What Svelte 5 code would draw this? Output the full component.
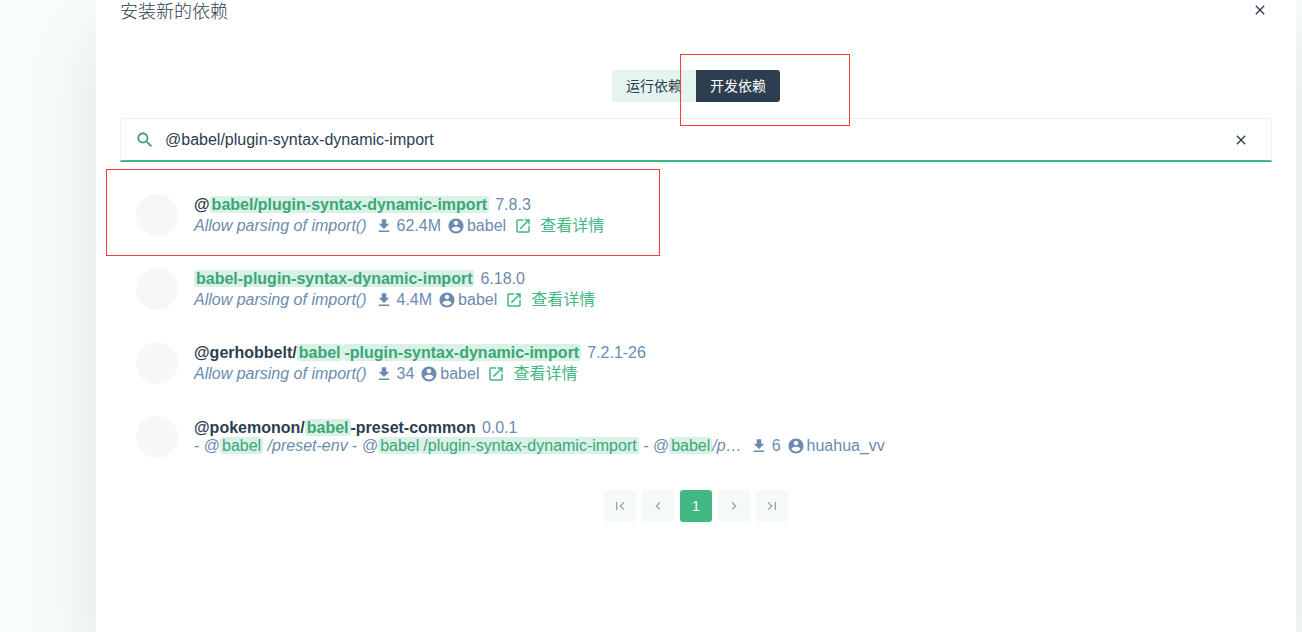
<script>
  let tab = 'dev';
  let search = '@babel/plugin-syntax-dynamic-import';

  // mark: true is the part of the text that matches the search
  const packages = [
    {
      name: [{text: '@'}, {text: 'babel/plugin-syntax-dynamic-import', mark: true}],
      version: '7.8.3',
      description: [{text: 'Allow parsing of import()'}],
      downloads: '62.4M',
      owner: 'babel',
      link: true,
      boxed: true
    },
    {
      name: [{text: 'babel-plugin-syntax-dynamic-import', mark: true}],
      version: '6.18.0',
      description: [{text: 'Allow parsing of import()'}],
      downloads: '4.4M',
      owner: 'babel',
      link: true
    },
    {
      name: [
        {text: '@gerhobbelt/'},
        {text: 'babel', mark: true},
        {text: '-plugin-syntax-dynamic-import', mark: true}
      ],
      version: '7.2.1-26',
      description: [{text: 'Allow parsing of import()'}],
      downloads: '34',
      owner: 'babel',
      link: true
    },
    {
      name: [{text: '@pokemonon/'}, {text: 'babel', mark: true}, {text: '-preset-common'}],
      version: '0.0.1',
      description: [
        {text: '- @', plain: true},
        {text: 'babel', mark: true},
        {text: ' /preset-env'},
        {text: ' - @', plain: true},
        {text: 'babel', mark: true},
        {text: '/plugin-syntax-dynamic-import', mark: true},
        {text: ' - @', plain: true},
        {text: 'babel', mark: true},
        {text: '/p…'}
      ],
      downloads: '6',
      owner: 'huahua_vv'
    }
  ];

  const icons = {
    close: 'M19 6.41L17.59 5 12 10.59 6.41 5 5 6.41 10.59 12 5 17.59 6.41 19 12 13.41 17.59 19 19 17.59 13.41 12z',
    search: 'M15.5 14h-.79l-.28-.27C15.41 12.59 16 11.11 16 9.5 16 5.91 13.09 3 9.5 3S3 5.91 3 9.5 5.91 16 9.5 16c1.61 0 3.09-.59 4.23-1.57l.27.28v.79l5 4.99L20.49 19l-4.99-5zm-6 0C7.01 14 5 11.99 5 9.5S7.01 5 9.5 5 14 7.01 14 9.5 11.99 14 9.5 14z',
    download: 'M19 9h-4V3H9v6H5l7 7 7-7zM5 18v2h14v-2H5z',
    account: 'M12 2C6.48 2 2 6.48 2 12s4.48 10 10 10 10-4.48 10-10S17.52 2 12 2zm0 3c1.66 0 3 1.34 3 3s-1.34 3-3 3-3-1.34-3-3 1.34-3 3-3zm0 14.2c-2.5 0-4.71-1.28-6-3.22.03-1.99 4-3.08 6-3.08 1.99 0 5.97 1.09 6 3.08-1.29 1.94-3.5 3.22-6 3.22z',
    open: 'M19 19H5V5h7V3H5c-1.11 0-2 .9-2 2v14c0 1.1.89 2 2 2h14c1.1 0 2-.9 2-2v-7h-2v7zM14 3v2h3.59l-9.83 9.83 1.41 1.41L19 6.41V10h2V3h-7z',
    first: 'M18.41 16.59L13.82 12l4.59-4.59L17 6l-6 6 6 6zM6 6h2v12H6z',
    prev: 'M15.41 7.41L14 6l-6 6 6 6 1.41-1.41L10.83 12z',
    next: 'M10 6L8.59 7.41 13.17 12l-4.58 4.59L10 18l6-6z',
    last: 'M5.59 7.41L10.18 12l-4.59 4.59L7 18l6-6-6-6zM16 6h2v12h-2z'
  };
</script>

<div class="page">
  <div class="modal">
    <header>
      <h1>安装新的依赖</h1>
      <button class="icon_button" aria-label="关闭">
        <svg class="small" viewBox="0 0 24 24"><path d={icons.close}/></svg>
      </button>
    </header>

    <div class="tabs">
      <button class:selected={tab == 'run'} on:click={() => tab = 'run'}>运行依赖</button>
      <button class:selected={tab == 'dev'} on:click={() => tab = 'dev'}>开发依赖</button>
      <div class="outline tab_outline"></div>
    </div>

    <div class="search">
      <svg viewBox="0 0 24 24"><path d={icons.search}/></svg>
      <input type="text" aria-label="搜索" bind:value={search}>
      <button class="icon_button" aria-label="清除" on:click={() => search = ''}>
        <svg class="small" viewBox="0 0 24 24"><path d={icons.close}/></svg>
      </button>
    </div>

    <ul class="list">
      {#each packages as item}
        <li>
          <div class="avatar"></div>
          <div class="content" class:with_link={item.link}>
            <div class="name">
              <strong>{#each item.name as part}<span class:mark={part.mark}>{part.text}</span>{/each}</strong>
              <span class="version">{item.version}</span>
            </div>
            <div class="info">
              <span class="description">{#each item.description as part}<span class:mark={part.mark} class:plain={part.plain}>{part.text}</span>{/each}</span>
              <span class="downloads">
                <svg viewBox="0 0 24 24"><path d={icons.download}/></svg>
                {item.downloads}
              </span>
              <span class="owner">
                <svg viewBox="0 0 24 24"><path d={icons.account}/></svg>
                {item.owner}
              </span>
              {#if item.link}
                <a href="#details">
                  <svg viewBox="0 0 24 24"><path d={icons.open}/></svg>
                  查看详情
                </a>
              {/if}
            </div>
          </div>
          {#if item.boxed}
            <div class="outline item_outline"></div>
          {/if}
        </li>
      {/each}
    </ul>

    <nav class="pagination">
      <button disabled aria-label="首页"><svg viewBox="0 0 24 24"><path d={icons.first}/></svg></button>
      <button disabled aria-label="上一页"><svg viewBox="0 0 24 24"><path d={icons.prev}/></svg></button>
      <button class="current">1</button>
      <button disabled aria-label="下一页"><svg viewBox="0 0 24 24"><path d={icons.next}/></svg></button>
      <button disabled aria-label="末页"><svg viewBox="0 0 24 24"><path d={icons.last}/></svg></button>
    </nav>
  </div>
</div>

<style>
:global(body){
  margin: 0;
  background: #f8fcfb;
}

.page{
  box-sizing: border-box;
  min-height: 100vh;
  padding: 0 6px 0 96px;
  display: flex;
  overflow: hidden;
  font-family: "Liberation Sans", "Noto Sans CJK SC", sans-serif;
  font-size: 16px;
  color: #2c3e50;
}

.modal{
  flex: 1;
  min-width: 0;
  padding: 0 24px;
  background: #fff;
  box-shadow: 0 36px 70px rgba(0,0,0,.1);
}

button{
  font-family: inherit;
  border: 0;
  padding: 0;
  color: inherit;
  cursor: pointer;
}

svg{
  flex: none;
  width: 18px;
  height: 18px;
  fill: currentColor;
}

svg.small{
  width: 16px;
  height: 16px;
}

header{
  height: 24px;
  display: flex;
  align-items: flex-start;
  justify-content: space-between;
}

h1{
  margin: 0;
  font-size: 18px;
  line-height: 24px;
  font-weight: 300;
}

.icon_button{
  width: 24px;
  height: 20px;
  display: flex;
  align-items: center;
  justify-content: center;
  background: none;
}

.tabs{
  position: relative;
  width: max-content;
  margin: 46px auto 16px;
  display: flex;
}

.tabs button{
  width: 84px;
  height: 32px;
  padding-bottom: 2px;
  font-size: 14px;
  background: #e4f5ef;
  border-radius: 3px 0 0 3px;
}

.tabs button + button{
  border-radius: 0 3px 3px 0;
}

.tabs button.selected{
  background: #2c3e50;
  color: #fff;
}

.outline{
  position: absolute;
  box-sizing: border-box;
  border: 1px solid #f83c3c;
  pointer-events: none;
}

.tab_outline{
  left: 68px;
  top: -16px;
  width: 170px;
  height: 72px;
}

.item_outline{
  left: -14px;
  top: -9px;
  width: 554px;
  height: 87px;
}

.search{
  box-sizing: border-box;
  height: 44px;
  padding: 0 18px 0 14px;
  display: flex;
  align-items: center;
  border: 1px solid #e4f5ef;
  border-bottom: 2px solid #42b983;
  border-radius: 3px 3px 0 0;
}

.search > svg{
  width: 20px;
  height: 20px;
  color: #3a9e72;
}

.search input{
  flex: 1;
  min-width: 0;
  margin-left: 10px;
  padding: 0;
  border: 0;
  outline: none;
  background: none;
  font: inherit;
  color: inherit;
}

.list{
  list-style: none;
  margin: 16px 0;
  padding: 0;
}

.list li{
  position: relative;
  height: 42px;
  padding: 16px;
  display: flex;
  align-items: center;
  gap: 16px;
}

.avatar{
  flex: none;
  width: 42px;
  height: 42px;
  border-radius: 50%;
  background: #f7f7f7;
}

.content{
  white-space: nowrap;
}

.name{
  display: flex;
  gap: 6px;
  line-height: 18px;
}

.mark{
  padding: 0 2px;
  border-radius: 3px;
  background: #d9f1e6;
  color: #3ba776;
  font-style: normal;
}

.version,
.info{
  color: #6b8bb0;
}

.info{
  display: flex;
  line-height: 18px;
}

.with_link .name{
  line-height: 22px;
}

.with_link .info{
  line-height: 20px;
}

.description{
  margin-right: 8px;
  font-style: italic;
  white-space: pre;
}

.plain{
  font-style: normal;
}

.downloads,
.owner,
.info a{
  display: flex;
  align-items: center;
}

.downloads{
  gap: 4px;
  margin-right: 6px;
}

.owner{
  gap: 2px;
  margin-right: 8px;
}

.info a{
  gap: 8px;
  color: #42b983;
  text-decoration: none;
}

.pagination{
  display: flex;
  justify-content: center;
  gap: 6px;
}

.pagination button{
  width: 32px;
  height: 32px;
  display: flex;
  align-items: center;
  justify-content: center;
  border-radius: 3px;
  background: #f5f9f8;
  color: #9da3a6;
  font-size: 14px;
}

.pagination svg{
  width: 16px;
  height: 16px;
}

.pagination button.current{
  background: #42b983;
  color: #fff;
}
</style>
